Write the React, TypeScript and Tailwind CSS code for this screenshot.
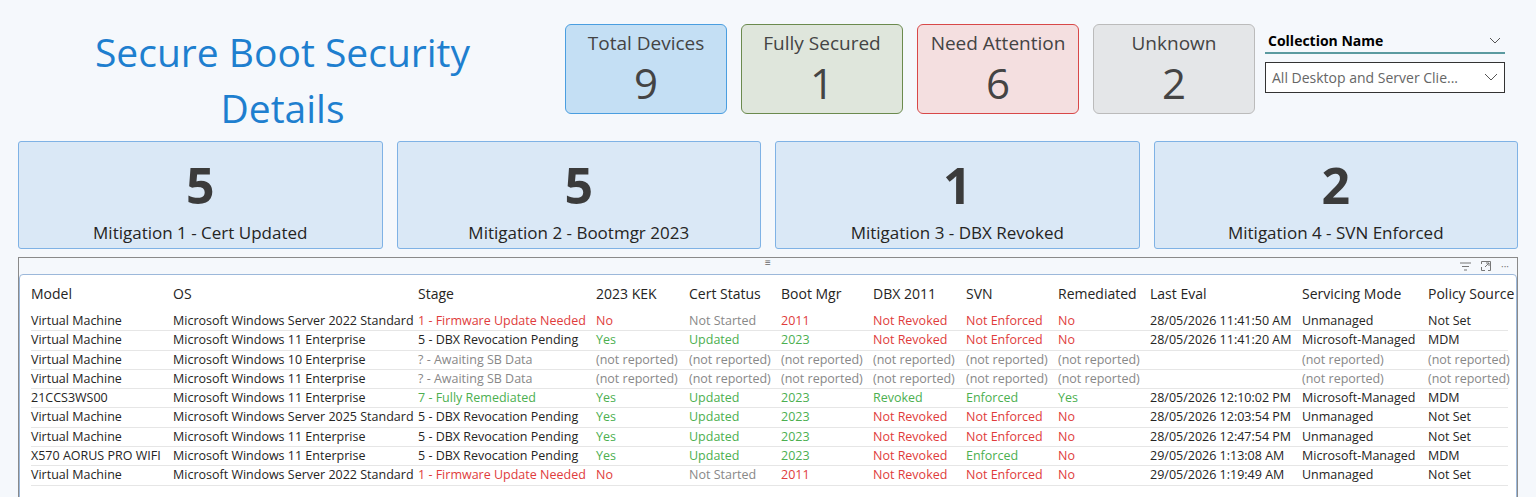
import React from "react";

const R = "text-[#e03c3c]", G = "text-[#4caf50]", N = "text-[#888888]", D = "text-[#252423]";
type C = [string, string];
const nr: C = ["(not reported)", N];
const rows: C[][] = [
  [["Virtual Machine", D], ["Microsoft Windows Server 2022 Standard", D], ["1 - Firmware Update Needed", R], ["No", R], ["Not Started", N], ["2011", R], ["Not Revoked", R], ["Not Enforced", R], ["No", R], ["28/05/2026 11:41:50 AM", D], ["Unmanaged", D], ["Not Set", D]],
  [["Virtual Machine", D], ["Microsoft Windows 11 Enterprise", D], ["5 - DBX Revocation Pending", D], ["Yes", G], ["Updated", G], ["2023", G], ["Not Revoked", R], ["Not Enforced", R], ["No", R], ["28/05/2026 11:41:20 AM", D], ["Microsoft-Managed", D], ["MDM", D]],
  [["Virtual Machine", D], ["Microsoft Windows 10 Enterprise", D], ["? - Awaiting SB Data", N], nr, nr, nr, nr, nr, nr, ["", D], nr, nr],
  [["Virtual Machine", D], ["Microsoft Windows 11 Enterprise", D], ["? - Awaiting SB Data", N], nr, nr, nr, nr, nr, nr, ["", D], nr, nr],
  [["21CCS3WS00", D], ["Microsoft Windows 11 Enterprise", D], ["7 - Fully Remediated", G], ["Yes", G], ["Updated", G], ["2023", G], ["Revoked", G], ["Enforced", G], ["Yes", G], ["28/05/2026 12:10:02 PM", D], ["Microsoft-Managed", D], ["MDM", D]],
  [["Virtual Machine", D], ["Microsoft Windows Server 2025 Standard", D], ["5 - DBX Revocation Pending", D], ["Yes", G], ["Updated", G], ["2023", G], ["Not Revoked", R], ["Not Enforced", R], ["No", R], ["28/05/2026 12:03:54 PM", D], ["Unmanaged", D], ["Not Set", D]],
  [["Virtual Machine", D], ["Microsoft Windows 11 Enterprise", D], ["5 - DBX Revocation Pending", D], ["Yes", G], ["Updated", G], ["2023", G], ["Not Revoked", R], ["Not Enforced", R], ["No", R], ["28/05/2026 12:47:54 PM", D], ["Unmanaged", D], ["Not Set", D]],
  [["X570 AORUS PRO WIFI", D], ["Microsoft Windows 11 Enterprise", D], ["5 - DBX Revocation Pending", D], ["Yes", G], ["Updated", G], ["2023", G], ["Not Revoked", R], ["Enforced", G], ["No", R], ["29/05/2026 1:13:08 AM", D], ["Microsoft-Managed", D], ["MDM", D]],
  [["Virtual Machine", D], ["Microsoft Windows Server 2022 Standard", D], ["1 - Firmware Update Needed", R], ["No", R], ["Not Started", N], ["2011", R], ["Not Revoked", R], ["Not Enforced", R], ["No", R], ["29/05/2026 1:19:49 AM", D], ["Unmanaged", D], ["Not Set", D]],
];
const heads = ["Model", "OS", "Stage", "2023 KEK", "Cert Status", "Boot Mgr", "DBX 2011", "SVN", "Remediated", "Last Eval", "Servicing Mode", "Policy Source"];
const widths = ["w-[142px]", "w-[245px]", "w-[178px]", "w-[93px]", "w-[92px]", "w-[92px]", "w-[93px]", "w-[92px]", "w-[92px]", "w-[152px]", "w-[126px]", "w-[82px]"];

function Card({ t, v, cls }: { t: string; v: string; cls: string }) {
  return (
    <div className={`w-[162px] h-[90px] rounded-md border flex flex-col items-center pt-[5px] ${cls}`}>
      <div className="text-[19px] leading-[26px] text-[#444]">{t}</div>
      <div className="text-[42px] leading-[54px] text-[#444]">{v}</div>
    </div>
  );
}
function Mit({ v, t }: { v: string; t: string }) {
  return (
    <div className="flex-1 h-[108px] rounded-[3px] border border-[#7fb2e5] bg-[#dae8f6] flex flex-col items-center pt-[14px]">
      <div className="text-[50px] leading-[58px] font-bold text-[#3b3b3b]">{v}</div>
      <div className="text-[17px] leading-[24px] text-[#252423] mt-[7px]">{t}</div>
    </div>
  );
}

export default function App() {
  return (
    <div className="w-[1536px] h-[497px] overflow-hidden bg-[#f5f8fc] relative" style={{ fontFamily: '"Open Sans", "Noto Sans", sans-serif' }}>
      <div className="flex h-[141px]">
        <div className="w-[565px] pt-[24px] flex justify-center">
          <div className="text-[39px] leading-[56px] text-[#1e7fcf] text-center w-[440px]">Secure Boot Security Details</div>
        </div>
        <div className="flex gap-[14px] pt-[24px]">
          <Card t="Total Devices" v="9" cls="bg-[#c4dff4] border-[#4a9ee0]" />
          <Card t="Fully Secured" v="1" cls="bg-[#dfe6dc] border-[#6b8a4e]" />
          <Card t="Need Attention" v="6" cls="bg-[#f4dfe0] border-[#d84848]" />
          <Card t="Unknown" v="2" cls="bg-[#e4e6e8] border-[#bbbbbb]" />
        </div>
        <div className="ml-[10px] w-[240px] pt-[30px]">
          <div className="flex justify-between items-center border-b-2 border-[#5b9aa0] pb-[1px] pl-[3px] pr-[4px]">
            <span className="text-[14px] font-bold text-black">Collection Name</span>
            <svg width="12" height="8" viewBox="0 0 12 8"><path d="M1 1l5 5 5-5" stroke="#555" fill="none" /></svg>
          </div>
          <div className="mt-[8px] h-[31px] border border-[#333] bg-white flex items-center justify-between px-[6px]">
            <span className="text-[14px] text-[#666]">All Desktop and Server Clie...</span>
            <svg width="14" height="9" viewBox="0 0 14 9"><path d="M1 1l6 6 6-6" stroke="#555" fill="none" /></svg>
          </div>
        </div>
      </div>
      <div className="flex gap-[14px] px-[18px]">
        <Mit v="5" t="Mitigation 1 - Cert Updated" />
        <Mit v="5" t="Mitigation 2 - Bootmgr 2023" />
        <Mit v="1" t="Mitigation 3 - DBX Revoked" />
        <Mit v="2" t="Mitigation 4 - SVN Enforced" />
      </div>
      <div className="mx-[18px] mt-[8px] h-[260px] border border-[#8a8a8a] relative">
        <div className="absolute left-1/2 -translate-x-1/2 top-0 text-[#666] text-[10px] leading-[8px]">≡</div>
        <div className="h-[16px] flex justify-end items-center gap-[10px] pr-[8px] text-[#777]">
          <svg width="11" height="9" viewBox="0 0 11 9"><path d="M0 1h11M2 4.5h7M4 8h3" stroke="#777" /></svg>
          <svg width="10" height="10" viewBox="0 0 10 10"><path d="M0.5 3V0.5H9.5V9.5H7M0.5 6v3.5H4M4 6l4-4M5 2h3v3" stroke="#777" fill="none" /></svg>
          <span className="text-[10px] leading-[10px]">···</span>
        </div>
        <div className="h-[240px] border border-[#9cb8da] rounded-[4px] bg-white pl-[11px] pt-[9px]">
          <div className="flex text-[14px] leading-[20px] text-[#252423] h-[28px] items-start">
            {heads.map((h, i) => <div key={i} className={`${widths[i]} shrink-0 whitespace-nowrap`}>{h}</div>)}
          </div>
          {rows.map((r, ri) => (
            <div key={ri} className="flex text-[12.5px] leading-[18px] h-[19.3px] border-b border-[#e6e6e6] w-[1477px]">
              {r.map(([t, c], i) => <div key={i} className={`${widths[i]} shrink-0 whitespace-nowrap ${c}`}>{t}</div>)}
            </div>
          ))}
        </div>
      </div>
    </div>
  );
}
